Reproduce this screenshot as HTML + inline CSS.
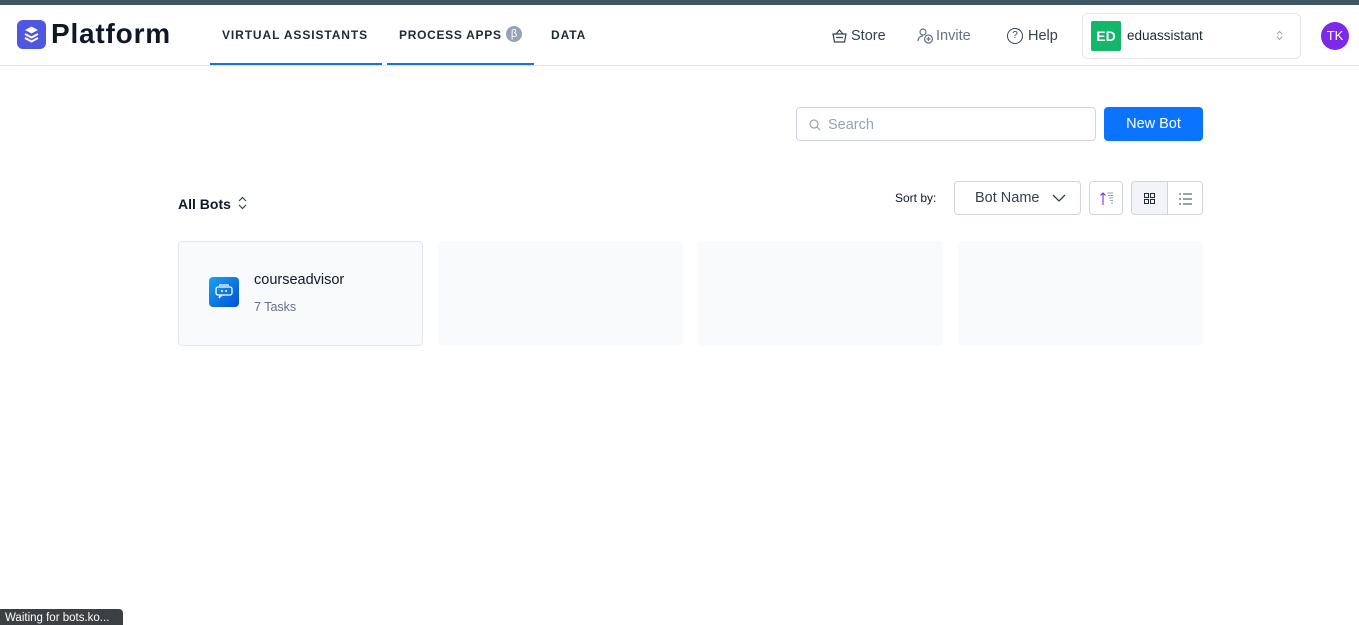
<!DOCTYPE html>
<html><head><style>
*{box-sizing:border-box;margin:0;padding:0}
body{width:1359px;height:625px;overflow:hidden;background:#fff;font-family:"Liberation Sans",sans-serif;color:#1d2939;position:relative}
.top{position:absolute;left:0;top:0;width:1359px;height:5px;background:#3e5663}
.hdr{position:absolute;left:0;top:5px;width:1359px;height:61px;border-bottom:1px solid #e4e7ec}
.a{position:absolute}
.nav{font-size:12px;font-weight:bold;letter-spacing:0.9px;color:#1d2939;top:23px}
.ul{position:absolute;top:58px;height:2px;background:#1570ef}
.r{font-size:14.5px;color:#344054;top:23px}
.card{position:absolute;top:241px;width:245px;height:105px;border-radius:4px;background:#f9fafb}
.btn{position:absolute;border:1px solid #d0d5dd;border-radius:4px;background:#fff}
</style></head><body>
<div class="top"></div>
<div class="hdr">
 <svg class="a" style="left:17px;top:15px" width="29" height="29" viewBox="0 0 29 29"><rect width="29" height="29" rx="6" fill="#4f56e0"/><path d="M8 10l6.5-3.5L21 10l-6.5 3.5z" fill="#fff"/><path d="M8 14l6.5 3.5L21 14M8 18l6.5 3.5L21 18" stroke="#fff" stroke-width="2" fill="none"/></svg>
 <div class="a" style="left:51px;top:13px;font-size:28px;font-weight:bold;color:#101828;letter-spacing:0.8px">Platform</div>
 <div class="a nav" style="left:222px">VIRTUAL ASSISTANTS</div>
 <div class="a nav" style="left:399px;letter-spacing:0.7px">PROCESS APPS</div>
 <div class="a" style="left:506px;top:21px;width:16px;height:16px;border-radius:8px;background:#98a2b3;color:#fff;font-size:11px;text-align:center;line-height:16px">β</div>
 <div class="a nav" style="left:551px">DATA</div>
 <div class="ul" style="left:210px;width:172px"></div>
 <div class="ul" style="left:387px;width:147px"></div>
 <svg class="a" style="left:832px;top:24px" width="15" height="14"><path d="M1 5h13l-1.5 8h-10z M4 5l3.5-4 3.5 4 M4 8.5h7" stroke="#344054" stroke-width="1.2" fill="none"/></svg>
 <div class="a r" style="left:851px">Store</div>
 <svg class="a" style="left:917px;top:22px" width="17" height="17"><circle cx="6" cy="5" r="3" stroke="#667085" stroke-width="1.2" fill="none"/><path d="M1 14c0-3 2-5 5-5" stroke="#667085" stroke-width="1.2" fill="none"/><circle cx="11.5" cy="12" r="4" stroke="#667085" stroke-width="1.2" fill="none"/><path d="M11.5 10v4M9.5 12h4" stroke="#667085" stroke-width="1.2"/></svg>
 <div class="a r" style="left:936px;color:#667085">Invite</div>
 <div class="a" style="left:1007px;top:23px;width:16px;height:16px;border:1.3px solid #344054;border-radius:8px;font-size:10px;text-align:center;line-height:13px;color:#344054">?</div>
 <div class="a r" style="left:1028px">Help</div>
 <div class="a" style="left:1082px;top:8px;width:219px;height:46px;border:1px solid #e4e7ec;border-radius:6px">
  <div class="a" style="left:8px;top:7px;width:30px;height:30px;background:#12b76a;border-radius:2px;color:#fff;font-weight:bold;font-size:14px;text-align:center;line-height:30px">ED</div>
  <div class="a" style="left:44px;top:14px;font-size:13.5px;color:#1d2939">eduassistant</div>
  <svg class="a" style="left:193px;top:16px" width="7" height="11"><path d="M1 4l2.5-2.5L6 4M1 7l2.5 2.5L6 7" stroke="#98a2b3" fill="none"/></svg>
 </div>
 <div class="a" style="left:1321px;top:17px;width:28px;height:28px;border-radius:14px;background:#7d2ae8;color:#fff;font-size:13px;text-align:center;line-height:28px">TK</div>
</div>
<div class="btn" style="left:796px;top:107px;width:300px;height:34px"><svg class="a" style="left:12px;top:11px" width="12" height="12"><circle cx="5" cy="5" r="4" stroke="#98a2b3" fill="none" stroke-width="1.2"/><path d="M8 8l3 3" stroke="#98a2b3" stroke-width="1.2"/></svg><span class="a" style="left:31px;top:9px;font-size:14.5px;color:#98a2b3">Search</span></div>
<div class="a" style="left:1104px;top:107px;width:99px;height:34px;background:#0b74ff;border-radius:4px;color:#fff;font-size:14.5px;text-align:center;line-height:34px">New Bot</div>
<div class="a" style="left:178px;top:196px;font-size:14px;font-weight:bold;color:#101828">All Bots</div>
<svg class="a" style="left:238px;top:196px" width="9" height="14"><path d="M1 5l3.5-3.5L8 5M1 9l3.5 3.5L8 9" stroke="#344054" stroke-width="1.2" fill="none"/></svg>
<div class="a" style="left:895px;top:191px;font-size:12px;color:#101828">Sort by:</div>
<div class="btn" style="left:954px;top:181px;width:127px;height:34px"><span class="a" style="left:20px;top:8px;font-size:14.5px;color:#344054">Bot Name</span><svg class="a" style="left:97px;top:12px" width="14" height="9"><path d="M1 1l6 6 6-6" stroke="#344054" stroke-width="1.3" fill="none"/></svg></div>
<div class="btn" style="left:1089px;top:181px;width:34px;height:34px"><svg class="a" style="left:10px;top:9px" width="14" height="15"><path d="M3 14V2M0.5 4.5L3 2l2.5 2.5" stroke="#7d2ae8" stroke-width="1.1" fill="none"/><path d="M7 2h6M8 4.5h5M9 7h4M10 9.5h3M11 12h2" stroke="#98a2b3" stroke-width="1"/></svg></div>
<div class="btn" style="left:1131px;top:181px;width:72px;height:34px;overflow:hidden"><div class="a" style="left:0;top:0;width:36px;height:34px;background:#f2f4f7;border-right:1px solid #d0d5dd"></div>
<svg class="a" style="left:12px;top:11px" width="11" height="11"><rect x="0.5" y="0.5" width="4" height="4" fill="none" stroke="#1d2939"/><rect x="6.5" y="0.5" width="4" height="4" fill="none" stroke="#1d2939"/><rect x="0.5" y="6.5" width="4" height="4" fill="none" stroke="#1d2939"/><rect x="6.5" y="6.5" width="4" height="4" fill="none" stroke="#1d2939"/></svg>
<svg class="a" style="left:47px;top:11px" width="13" height="12"><path d="M0 1h2M0 6h2M0 11h2M4 1h9M4 6h9M4 11h9" stroke="#344054"/></svg></div>
<div class="card" style="left:178px;border:1px solid #e4e7ec;background:#f9fafb">
 <div class="a" style="left:30px;top:35px;width:30px;height:30px;border-radius:4px;background:linear-gradient(135deg,#1aa3f0,#0050d8)"></div>
 <svg class="a" style="left:36px;top:42px" width="18" height="16"><rect x="1" y="3" width="16" height="8" rx="2" fill="none" stroke="#fff" stroke-width="1.3"/><path d="M4 1h10M5 11l-1 3 3-3" stroke="#fff" stroke-width="1.2" fill="none"/><circle cx="7" cy="7" r="1" fill="#fff"/><circle cx="11" cy="7" r="1" fill="#fff"/></svg>
 <div class="a" style="left:75px;top:30px;font-size:14.5px;color:#101828">courseadvisor</div>
 <div class="a" style="left:75px;top:58px;font-size:12.5px;color:#667085">7 Tasks</div>
</div>
<div class="card" style="left:438px"></div>
<div class="card" style="left:698px"></div>
<div class="card" style="left:958px"></div>
<div class="a" style="left:0;top:609px;width:123px;height:16px;background:#3c4043;border-radius:0 4px 0 0;color:#fff;font-size:11.5px;padding:3px 0 0 5px">Waiting for bots.ko...</div>
</body></html>
